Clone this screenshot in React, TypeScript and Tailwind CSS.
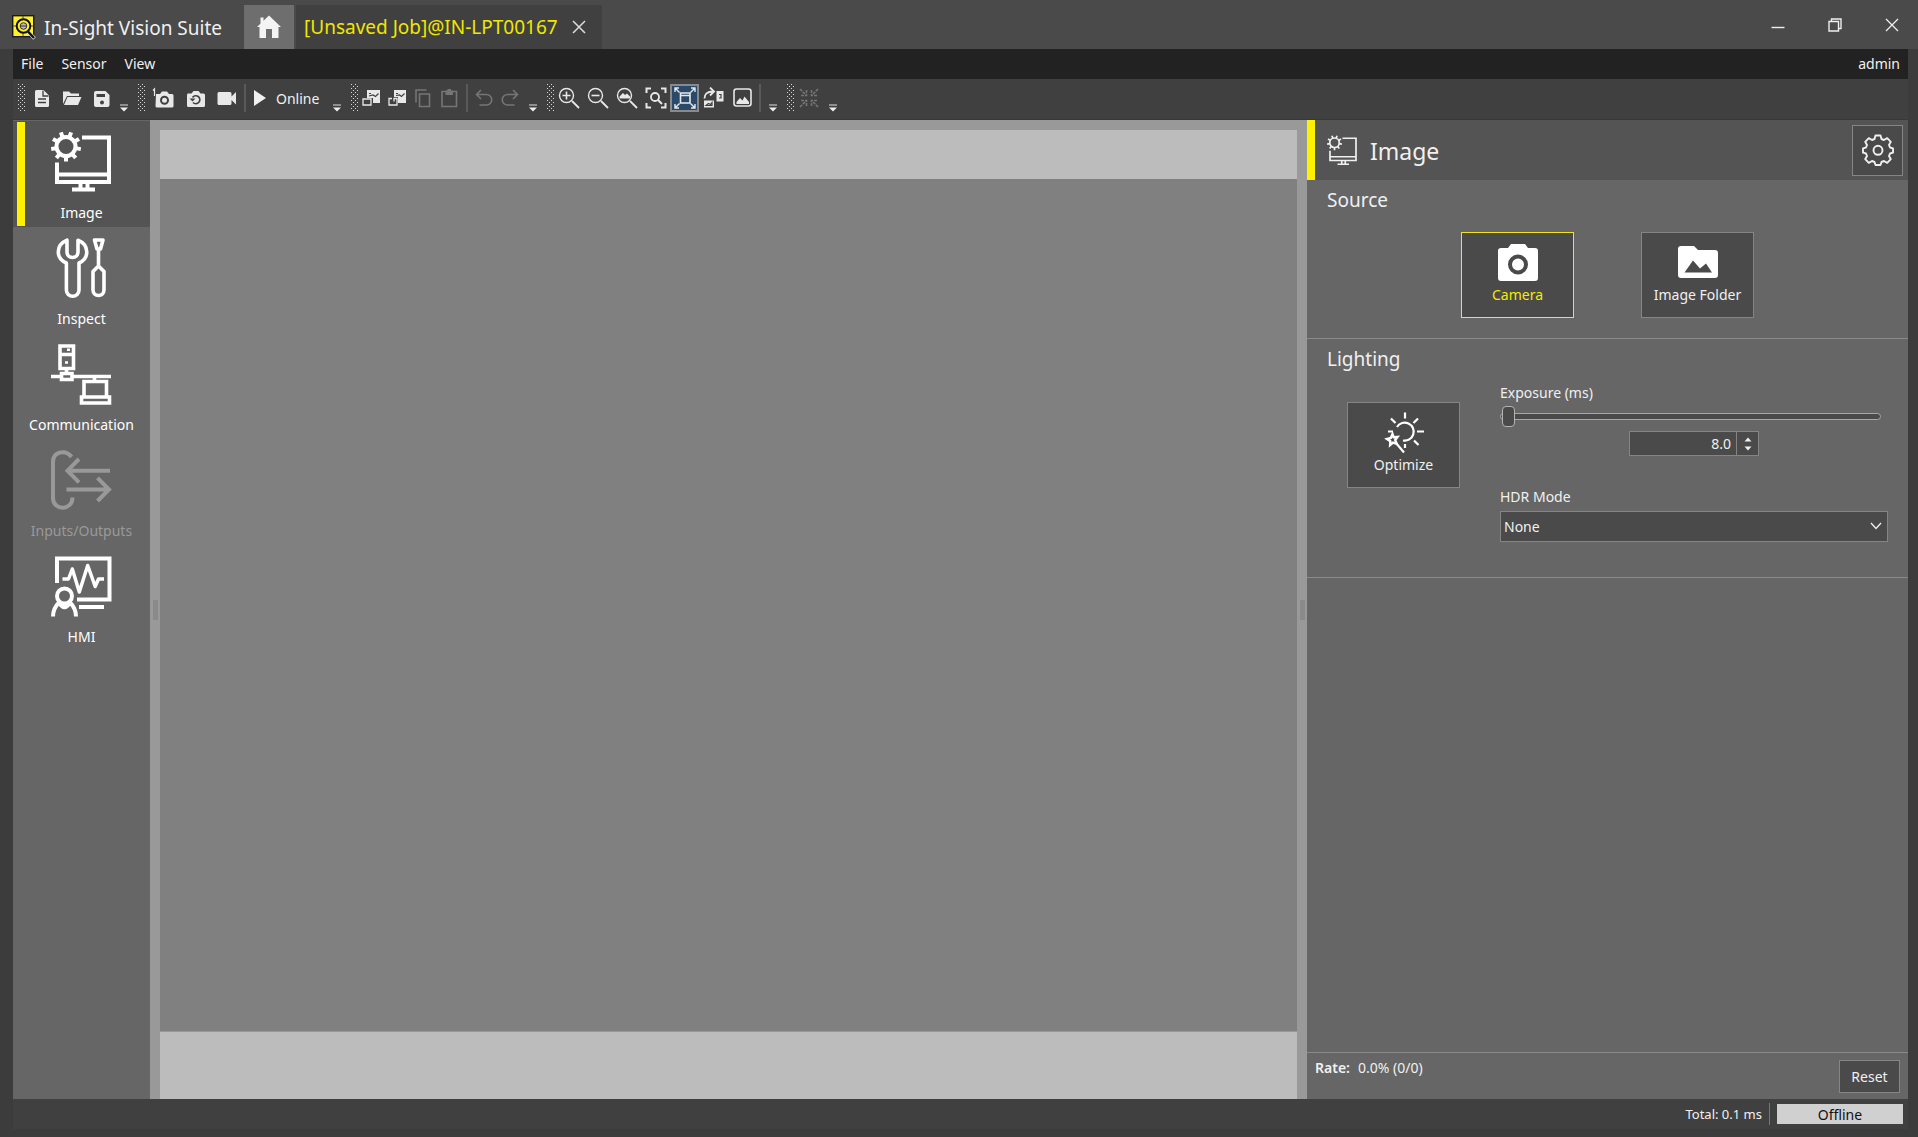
import type { ReactNode } from "react";

const gearTeeth = [0, 40, 80, 120, 160, 200, 240, 280, 320];

function MonitorGear({ className, thin }: { className: string; thin?: boolean }) {
  return (
    <svg viewBox="0 0 62 62" className={className} fill="none" stroke="currentColor" strokeWidth={thin ? 3.4 : 4} aria-hidden="true">
      <circle cx="15" cy="15.500" r="9.500" />
      {gearTeeth.map((a) => (
        <path key={a} d="M15 6V0.500" transform={`rotate(${a + 20} 15 15.500)`} />
      ))}
      <path d="M31 6.500H58V51H6V31.500M6 43.500H58M29.500 52v6M36.500 52v6M21 58.500h23" />
    </svg>
  );
}

function Tools() {
  return (
    <svg viewBox="0 0 62 62" className="size-[62px]" fill="none" stroke="currentColor" strokeWidth="3.600" strokeLinejoin="round" aria-hidden="true">
      <path d="M16 3.200V15a5.500 5.500 0 0 0 11 0V3.200C38.500 8 38.500 21.500 28 26V53a6.300 6.300 0 0 1-12.600 0V26C4.500 21.500 4.500 8 16 3.200Z" />
      <path d="M43.500 3H52l-2.500 9h-3.500ZM47.500 12v17M47.500 29l-5.500 5.500V53a5.500 5.500 0 0 0 11 0V34.500Z" />
    </svg>
  );
}

function Network() {
  return (
    <svg viewBox="0 0 62 62" className="size-[62px]" fill="none" stroke="currentColor" strokeWidth="3.600" aria-hidden="true">
      <path d="M9 3h13.500v22.500H9ZM9 11.500h13.500M15.500 26v4M10.500 30.500h10.500v6H10.500ZM0 33.500h10.500M21 33.500H60M43.500 34v4M33 54V38.500H55.500V54M30.500 54H58.500v6H30.500Z" />
      <path d="M16 6.800h3M14 19.500h3" strokeWidth="2.500" />
    </svg>
  );
}

function InOut() {
  return (
    <svg viewBox="0 0 62 62" className="size-[62px]" fill="none" stroke="currentColor" strokeWidth="4" aria-hidden="true">
      <path d="M20.500 8C15 0.500 2 2 2 13V49C2 62 21.500 62 21.500 48.500" />
      <path d="M59 21.700H16.500M28 10L16.500 21.700L28 33.400M15.500 40.500H58M46.500 28.800L58 40.500L46.500 52" />
    </svg>
  );
}

function Hmi() {
  return (
    <svg viewBox="0 0 62 62" className="size-[62px]" fill="none" stroke="currentColor" strokeWidth="4" aria-hidden="true">
      <path d="M6 28V3.500H58.500V44.500H26M28 52H53" />
      <path d="M11.500 24H17.500L21.300 14L28.300 37L36.700 10.500L44.200 31.500L47.500 24H53" strokeWidth="3.500" strokeLinejoin="round" />
      <circle cx="13.500" cy="41" r="7.500" />
      <path d="M2 61.500C2 56 4 51.500 8 47.500Q13.500 57 19 47.500C23 51.500 25 56 25 61.500" />
    </svg>
  );
}

function Grip() {
  return (
    <svg viewBox="0 0 7 28" className="h-7 w-[7px] shrink-0" shapeRendering="crispEdges" aria-hidden="true">
      {[0, 1, 2, 3, 4, 5, 6].map((i) => (
        <path key={i} d={`M0 ${i * 4}h1v1h-1ZM4 ${i * 4}h1v1h-1ZM2 ${i * 4 + 2}h1v1h-1ZM6 ${i * 4 + 2}h1v1h-1Z`} fill="#d8d8d8" />
      ))}
    </svg>
  );
}

function Overflow({ label }: { label: string }) {
  return (
    <button aria-label={label} className="flex h-7 w-[14px] items-end justify-center">
      <svg viewBox="0 0 8 8" className="size-2" aria-hidden="true">
        <path d="M0 1h8" stroke="#aaa" strokeWidth="1.500" />
        <path d="M0 3.500h8L4 7.500Z" fill="#eee" />
      </svg>
    </button>
  );
}

function Tool({ label, width, disabled, active, children }: { label: string; width: string; disabled?: boolean; active?: boolean; children: ReactNode }) {
  return (
    <button
      aria-label={label}
      disabled={disabled}
      aria-pressed={active}
      className={`flex h-7 shrink-0 items-center justify-center ${width} ${disabled ? "text-[#757575]" : "text-[#e8e8e8]"} ${active ? "border-2 border-[#8a8a8a] bg-[#2a4a6b]" : ""}`}
    >
      <svg viewBox="0 0 22 22" className="size-[22px] shrink-0" fill="none" stroke="currentColor" strokeWidth="1.600" aria-hidden="true">
        {children}
      </svg>
    </button>
  );
}

function Divider() {
  return <div className="h-7 w-0.5 bg-[#5a5a5a]" />;
}

function Group({ label, children }: { label: string; children: ReactNode }) {
  return (
    <div role="toolbar" aria-label={label} className="flex items-center">
      <Grip />
      {children}
    </div>
  );
}

const lens = "M14 14L21 21";

function Toolbar() {
  return (
    <div className="flex h-[41px] items-center gap-[7px] border-b border-[#383838] bg-[#404040] pb-0.5 pl-[5px]">
      <Group label="Job files">
        <div className="w-0.5" />
        <Tool label="New job" width="w-[30px]">
          <path d="M4 4.500A1.500 1.500 0 0 1 5.500 3H12.500L18 8.500V18.500A1.500 1.500 0 0 1 16.500 20H5.500A1.500 1.500 0 0 1 4 18.500Z" fill="currentColor" stroke="none" />
          <path d="M7 12h8M7 15.500h8M12 3.500v5.500h5.500" stroke="#404040" strokeWidth="1.300" />
        </Tool>
        <Tool label="Open job" width="w-[30px]">
          <path d="M2 17V4.500h6l2 2h8V9H6Z" fill="currentColor" stroke="none" />
          <path d="M6.500 10H20.500L17 18H3Z" fill="currentColor" stroke="none" />
        </Tool>
        <Tool label="Save job" width="w-[30px]">
          <path d="M3 6a2 2 0 0 1 2-2H14.500L18.500 8V18a2 2 0 0 1-2 2H5a2 2 0 0 1-2-2Z" fill="currentColor" stroke="none" />
          <path d="M5.500 7h8.500v3H5.500Z" fill="#404040" stroke="none" />
          <circle cx="11" cy="15.500" r="2" fill="#404040" stroke="none" />
        </Tool>
        <Overflow label="More job file tools" />
      </Group>
      <Group label="Acquisition">
        <div className="w-0.5" />
        <Tool label="Trigger once" width="w-8">
          <path d="M4 7h4l2-2.500h5L17 7h3a1.500 1.500 0 0 1 1.500 1.500V19a1.500 1.500 0 0 1-1.500 1.500H5A1.500 1.500 0 0 1 3.500 19Z" fill="currentColor" stroke="none" />
          <circle cx="12.500" cy="13.300" r="3.500" stroke="#404040" strokeWidth="2" />
          <path d="M1 3.500L2.500 2v7" strokeWidth="1.200" />
        </Tool>
        <Tool label="Repeat trigger" width="w-8">
          <path d="M3.500 6.500h4l2-2.500h5l2 2.500h3A1.500 1.500 0 0 1 21 8V18.500a1.500 1.500 0 0 1-1.500 1.500h-15A1.500 1.500 0 0 1 3 18.500V8Z" fill="currentColor" stroke="none" />
          <path d="M9 15.500a4 4 0 1 0-0.500-5" stroke="#404040" />
          <path d="M5.500 11.500h6L8.500 14.500Z" fill="#404040" stroke="none" />
        </Tool>
        <Tool label="Live video" width="w-8">
          <path d="M1.500 6.500A1.500 1.500 0 0 1 3 5h11a1.500 1.500 0 0 1 1.500 1.500V9.500l4.500-4.500V17.500l-4.500-4.500v3.500a1.500 1.500 0 0 1-1.500 1.500H3a1.500 1.500 0 0 1-1.500-1.500Z" fill="currentColor" stroke="none" />
        </Tool>
        <div className="w-px" />
        <Divider />
        <button className="flex h-7 items-center gap-2.5 px-2 text-[#f0f0f0]">
          <svg viewBox="0 0 12 16" className="h-4 w-3" aria-hidden="true">
            <path d="M0 0L12 8L0 16Z" fill="currentColor" />
          </svg>
          <span className="w-[46px] text-left text-[14px]">Online</span>
        </button>
        <Overflow label="More acquisition tools" />
      </Group>
      <Group label="Edit">
        <Tool label="Send to back" width="w-[26px]">
          <path d="M7 3H20V16H13V11H7Z" fill="currentColor" stroke="none" />
          <path d="M9 6.500h2M9 9l4-1 2.500 1.500L18.500 6.500" stroke="#404040" strokeWidth="1.200" />
          <path d="M3 12h8v6H3Z" strokeWidth="1.300" />
        </Tool>
        <Tool label="Bring to front" width="w-[26px]">
          <path d="M8 3H20V16H12V10H8Z" fill="currentColor" stroke="none" />
          <path d="M10 6.500h2M10 8.500l3.500-0.500 2 1.500L18.500 6.500" stroke="#404040" strokeWidth="1.200" />
          <path d="M6 11.500H3V18h8v-6.500H8v3" strokeWidth="1.300" />
        </Tool>
        <Tool label="Copy" width="w-[26px]" disabled>
          <path d="M7.500 7h10v12.500h-10ZM4 15.500V3h10.500" />
        </Tool>
        <Tool label="Paste" width="w-[26px]" disabled>
          <path d="M4 4.500H18.500V19.500H4Z" />
          <path d="M7.500 3.500h7.500v4.500H7.500ZM9.500 2h3.500v2H9.500Z" fill="currentColor" stroke="none" />
        </Tool>
        <div className="w-1" />
        <Divider />
        <div className="w-[3px]" />
        <Tool label="Undo" width="w-[26px]" disabled>
          <path d="M8 3L3.500 7.500L8 12M4 7.500H13.500a5 5 0 0 1 0 10.500H6.500" />
        </Tool>
        <Tool label="Redo" width="w-[26px]" disabled>
          <path d="M14 3l4.500 4.500L14 12M18 7.500H8.500a5 5 0 0 0 0 10.500H15.500" />
        </Tool>
        <div className="w-[3px]" />
        <Overflow label="More edit tools" />
      </Group>
      <Group label="View">
        <Tool label="Zoom in" width="w-[29px]">
          <circle cx="8.500" cy="8.500" r="7" strokeWidth="1.400" />
          <path d={lens} strokeWidth="1.800" />
          <path d="M4.500 8.500h8M8.500 4.500v8" />
        </Tool>
        <Tool label="Zoom out" width="w-[29px]">
          <circle cx="8.500" cy="8.500" r="7" strokeWidth="1.400" />
          <path d={lens} strokeWidth="1.800" />
          <path d="M4.500 8.500h8" />
        </Tool>
        <Tool label="Zoom image" width="w-[29px]">
          <circle cx="8.500" cy="8.500" r="7" strokeWidth="1.400" />
          <path d={lens} strokeWidth="1.800" />
          <path d="M3.500 11.500V9.500L7 6l2 2 2-1.500 3 3v2Z" fill="currentColor" stroke="none" />
        </Tool>
        <Tool label="Zoom to region" width="w-[29px]">
          <path d="M1.500 6V1.500H6M16 1.500h4.500V6M20.500 16v4.500H16M6 20.500H1.500V16" strokeWidth="2" />
          <circle cx="10" cy="10" r="4" strokeWidth="1.800" />
          <path d="M12.800 12.800L17 17" strokeWidth="2" />
        </Tool>
        <Tool label="Fit to window" width="w-[29px]" active>
          <path d="M6.500 6h9.500v10H6.500ZM6.500 8.500H16" />
          <path d="M1 5V1h4M1 1l4.500 4.500M17 1h4v4M21 1l-4.500 4.500M21 17v4h-4M21 21l-4.500-4.500M5 21H1v-4M1 21l4.500-4.500" strokeWidth="1.400" />
        </Tool>
        <Tool label="Rotate image" width="w-[29px]">
          <path d="M13.500 4H20.500V14.500H13.500Z" fill="currentColor" stroke="none" />
          <path d="M1 13.500H11V20.500H1Z" fill="currentColor" stroke="none" />
          <path d="M1.500 11.500C1.500 7 4 4.500 10 4.500M7 0.500L11 4.500L7 8.500" strokeWidth="1.800" />
          <path d="M16 7.500h2v3.500h-2M3 18.500l2.500-2 2 1 1.500-2v3Z" stroke="#404040" strokeWidth="1.200" />
        </Tool>
        <Tool label="Show image" width="w-[29px]">
          <rect x="2" y="2" width="17" height="17" rx="2.500" />
          <path d="M4.500 17V15l3.500-4 2.500 2.500L12.500 9.500l4.500 5.500v2Z" fill="currentColor" stroke="none" />
        </Tool>
        <div className="w-0.5" />
        <Divider />
        <div className="w-[5px]" />
        <Overflow label="More view tools" />
      </Group>
      <Group label="Full screen">
        <Tool label="Collapse" width="w-[29px]" disabled>
          <path d="M2 2l6 6M3 8.500h5.500V3M20 2l-6 6M19 8.500h-5.500V3M20 20l-6-6M13.500 19v-5.500H19M2 20l6-6M3 13.500h5.500V19" strokeDasharray="3 1" />
        </Tool>
        <div className="w-[3px]" />
        <Overflow label="More screen tools" />
      </Group>
    </div>
  );
}

const navItems = [
  { label: "Image", icon: <MonitorGear className="size-[62px]" />, state: "on" },
  { label: "Inspect", icon: <Tools />, state: "" },
  { label: "Communication", icon: <Network />, state: "" },
  { label: "Inputs/Outputs", icon: <InOut />, state: "off" },
  { label: "HMI", icon: <Hmi />, state: "" },
];

function Sidebar() {
  return (
    <nav className="flex w-[137px] shrink-0 flex-col bg-[#666] pt-px">
      {navItems.map((n) => (
        <button
          key={n.label}
          disabled={n.state === "off"}
          className={`relative flex h-[106px] flex-col items-center pt-2.5 ${n.state === "off" ? "text-[#999]" : "text-white"} ${n.state === "on" ? "bg-[#545454]" : ""}`}
        >
          {n.state === "on" && <span className="absolute inset-y-px left-1 w-2 bg-[#fff200]" />}
          {n.icon}
          <span className="mt-2.5 text-[14px] leading-5">{n.label}</span>
        </button>
      ))}
    </nav>
  );
}

function Splitter() {
  return (
    <div role="separator" className="flex w-2.5 shrink-0 items-center justify-center bg-[#999]">
      <div className="h-5 w-[5px] bg-[#8a8a8a]" />
    </div>
  );
}

function Tile({ label, selected, children }: { label: string; selected?: boolean; children: ReactNode }) {
  return (
    <button
      className={`flex h-[86px] w-[113px] shrink-0 flex-col items-center border bg-[#4a4a4a] pt-[9px] ${selected ? "border-[#f0e614] text-[#f5eb00]" : "border-[#858585] text-[#f0f0f0]"}`}
    >
      <svg viewBox="0 0 42 42" className="size-[42px] text-white" aria-hidden="true">
        {children}
      </svg>
      <span className="mt-px text-[14px] leading-5">{label}</span>
    </button>
  );
}

function Settings() {
  return (
    <aside className="flex w-[601px] shrink-0 flex-col bg-[#666] text-[#f0f0f0]">
      <header className="flex h-[60px] items-center border-l-8 border-[#fff200] bg-[#545454] pr-[5px] pl-3">
        <MonitorGear className="size-[31px]" thin />
        <h1 className="ml-3 grow pt-0.5 text-[23px] leading-8">Image</h1>
        <button aria-label="Image settings" className="flex size-[51px] items-center justify-center border border-[#858585] bg-[#4a4a4a]">
          <svg viewBox="0 0 32 32" className="size-8" fill="none" stroke="currentColor" strokeWidth="1.900" strokeLinejoin="round" aria-hidden="true">
            <path d="M13.500 1.500h5l1 3.500 2.500 1 3.200-1.800 3.600 3.600L27 11l1 2.500 3 .8v4.400l-3 .8L27 22l1.800 3.200-3.600 3.600L22 27l-2.500 1-1 3h-5l-1-3L10 27l-3.200 1.800-3.600-3.600L5 22l-1-2.500-3-.8v-4.400l3-.8L5 11 3.200 7.800 6.800 4.200 10 6l2.500-1Z" />
            <circle cx="16" cy="16.300" r="4.500" />
          </svg>
        </button>
      </header>
      <section className="h-[159px] border-b border-[#8a8a8a]">
        <h2 className="pt-2 pl-5 text-[19px] leading-6">Source</h2>
        <div className="mt-5 flex justify-center gap-[67px]">
          <Tile label="Camera" selected>
            <path d="M4 6h7l3-4H28l3 4h7a3 3 0 0 1 3 3V36a3 3 0 0 1-3 3H4a3 3 0 0 1-3-3V9a3 3 0 0 1 3-3Z" fill="currentColor" />
            <circle cx="21" cy="22.500" r="8" fill="none" stroke="#4a4a4a" strokeWidth="4" />
          </Tile>
          <Tile label="Image Folder">
            <path d="M4 4H17l4 4H38a3 3 0 0 1 3 3V33a3 3 0 0 1-3 3H4a3 3 0 0 1-3-3V7a3 3 0 0 1 3-3Z" fill="currentColor" />
            <path d="M7.500 30.500L16 18.500l7 8 6-5 6 9Z" fill="#4a4a4a" />
          </Tile>
        </div>
      </section>
      <section className="h-[239px] border-b border-[#8a8a8a]">
        <h2 className="pt-2 pl-5 text-[19px] leading-6">Lighting</h2>
        <div className="flex items-start gap-10 pr-5 pl-10">
          <div className="pt-[31px]">
            <Tile label="Optimize">
              <g fill="none" stroke="currentColor" strokeWidth="2.200">
                <path d="M14 15a9 9 0 1 1 6 13.500" />
                <path d="M22 0.500v6M34 19.500h7M35 6.500l-4.500 4.500M8 6.500l4.500 4.500M31 28.500l4.500 4.500M22 32v4M5 19.500h5" />
                <path d="M9.500 22l1.200 3.300 3.800-.3-2.300 3 1.500 3.800-3.700-1.300-2.900 2.500.2-3.800-3.300-2.200 3.800-1Z" strokeWidth="2.400" />
                <path d="M13 31l8 9.500" />
              </g>
            </Tile>
          </div>
          <div className="flex grow flex-col pt-3">
            <label htmlFor="exposure" className="text-[14px] leading-5">Exposure (ms)</label>
            <input
              id="exposure"
              type="range"
              min="0"
              max="2000"
              defaultValue="8"
              className="mt-[3px] mr-[7px] h-[21px] appearance-none bg-transparent [&::-webkit-slider-runnable-track]:h-[7px] [&::-webkit-slider-runnable-track]:rounded-sm [&::-webkit-slider-runnable-track]:border [&::-webkit-slider-runnable-track]:border-[#a8a8a8] [&::-webkit-slider-runnable-track]:bg-[#4a4a4a] [&::-webkit-slider-thumb]:-mt-2 [&::-webkit-slider-thumb]:h-[21px] [&::-webkit-slider-thumb]:w-[13px] [&::-webkit-slider-thumb]:appearance-none [&::-webkit-slider-thumb]:rounded [&::-webkit-slider-thumb]:border [&::-webkit-slider-thumb]:border-[#b4b4b4] [&::-webkit-slider-thumb]:bg-[#4a4a4a]"
            />
            <div className="mt-1 flex h-[25px] w-[130px] self-center border border-[#858585] bg-[#4a4a4a]">
              <input aria-label="Exposure value" defaultValue="8.0" className="w-full min-w-0 grow bg-transparent pr-[5px] text-right text-[14px] outline-none" />
              <div className="flex w-[22px] shrink-0 flex-col items-center justify-center gap-1 border-l border-[#858585]">
                <button aria-label="Increase exposure">
                  <svg viewBox="0 0 8 5" className="h-[5px] w-2" aria-hidden="true"><path d="M0.500 4.500L4 0.500L7.500 4.500Z" fill="currentColor" /></svg>
                </button>
                <button aria-label="Decrease exposure">
                  <svg viewBox="0 0 8 5" className="h-[5px] w-2" aria-hidden="true"><path d="M0.500 0.500L4 4.500L7.500 0.500Z" fill="currentColor" /></svg>
                </button>
              </div>
            </div>
            <label htmlFor="hdr" className="mt-[31px] text-[14px] leading-5">HDR Mode</label>
            <div className="relative mt-1">
              <select id="hdr" className="block h-[31px] w-full appearance-none border border-[#858585] bg-[#4a4a4a] pl-[3px] text-[14px] outline-none">
                <option>None</option>
              </select>
              <svg viewBox="0 0 12 8" className="pointer-events-none absolute top-[11px] right-1.5 h-2 w-3" fill="none" stroke="currentColor" strokeWidth="1.300" aria-hidden="true">
                <path d="M1 1l5 5.500L11 1" />
              </svg>
            </div>
          </div>
        </div>
      </section>
      <footer className="mt-auto flex h-[47px] items-start justify-between border-t border-[#8a8a8a] pr-2 pl-2">
        <p className="pt-[5px] text-[14px] leading-5">
          <b className="mr-2 font-semibold">Rate:</b>0.0% (0/0)
        </p>
        <button className="mt-[7px] h-[33px] w-[61px] border border-[#858585] bg-[#4a4a4a] text-[14px]">Reset</button>
      </footer>
    </aside>
  );
}

function TitleBar() {
  return (
    <header className="flex h-[49px] shrink-0 items-end bg-[#4a4a4a] pl-3 text-[#f0f0f0]">
      <div className="flex h-11 w-[232px] items-center">
        <svg viewBox="0 0 24 25" className="h-[25px] w-6 shrink-0" fill="none" aria-hidden="true">
          <rect x="0.700" y="0.700" width="21" height="21" fill="#fff02a" stroke="#1a1a1a" strokeWidth="1.400" />
          <path d="M11 1v21M1 11h21" stroke="#333" strokeWidth="0.800" />
          <path d="M16.500 17L22.500 23.500" stroke="#ddd" strokeWidth="3.600" />
          <path d="M16 16.500L22 23" stroke="#111" strokeWidth="2.400" />
          <circle cx="11.500" cy="11" r="6.800" fill="#fff02a" stroke="#111" strokeWidth="2" />
          <circle cx="11.500" cy="11" r="3.300" fill="#bbb" stroke="#333" />
          <path d="M8 11h7" stroke="#333" />
        </svg>
        <span className="ml-2 pt-px text-[19px] leading-7 whitespace-nowrap">In-Sight Vision Suite</span>
      </div>
      <button aria-label="Home" className="flex h-11 w-[50px] shrink-0 items-center justify-center bg-[#6e6e6e]">
        <svg viewBox="0 0 24 24" className="size-6" aria-hidden="true">
          <path d="M12 0.500L24 12H21.500V23H15V14H9V23H2.500V12H0L3.500 8.500V2.500H6.500V5.700Z" fill="#f4f4f4" />
        </svg>
      </button>
      <div className="ml-0.5 flex h-11 w-[306px] items-center bg-[#404040] pl-2">
        <span className="grow text-[19px] leading-7 whitespace-nowrap text-[#f0e600]">[Unsaved Job]@IN-LPT00167</span>
        <button aria-label="Close tab" className="mr-4">
          <svg viewBox="0 0 14 14" className="size-3.5" stroke="#ddd" strokeWidth="1.500" aria-hidden="true"><path d="M1 1l12 12M13 1L1 13" /></svg>
        </button>
      </div>
      <div className="ml-auto flex h-11 items-center gap-[43px] pr-[19px] pb-1">
        <button aria-label="Minimize">
          <svg viewBox="0 0 14 14" className="size-3.5" stroke="#eee" strokeWidth="1.400" aria-hidden="true"><path d="M0.500 9.500h13" /></svg>
        </button>
        <button aria-label="Restore">
          <svg viewBox="0 0 14 14" className="size-3.5" fill="none" stroke="#eee" strokeWidth="1.400" aria-hidden="true"><path d="M1 3.500h9.500V13H1ZM3.500 3.500V1H13v9.500h-2.500" /></svg>
        </button>
        <button aria-label="Close">
          <svg viewBox="0 0 14 14" className="size-3.5" stroke="#eee" strokeWidth="1.300" aria-hidden="true"><path d="M1 1l12 12M13 1L1 13" /></svg>
        </button>
      </div>
    </header>
  );
}

export default function App() {
  return (
    <div className="flex h-screen min-h-[700px] flex-col bg-[#3c3c3c] font-['Noto_Sans','Open_Sans',sans-serif]">
      <TitleBar />
      <div className="mr-2.5 mb-2 ml-[13px] flex min-h-0 grow flex-col">
        <div className="flex h-[30px] shrink-0 items-center bg-[#222] px-2 pb-0.5 text-[14px] text-[#f0f0f0]">
          <div role="menubar" className="flex grow gap-[18px]">
            <button role="menuitem">File</button>
            <button role="menuitem">Sensor</button>
            <button role="menuitem">View</button>
          </div>
          <span>admin</span>
        </div>
        <Toolbar />
        <div className="flex min-h-0 grow">
          <Sidebar />
          <Splitter />
          <main className="flex min-w-0 grow flex-col border-t-[10px] border-[#999] bg-[#808080]">
            <div className="h-[49px] bg-[#bcbcbc]" />
            <div className="grow border-b border-[#999]" />
            <div className="h-[67px] bg-[#bcbcbc]" />
          </main>
          <Splitter />
          <Settings />
        </div>
        <footer className="flex h-[30px] shrink-0 items-center justify-end bg-[#404040] pr-[5px] text-[13px] text-[#f0f0f0]">
          <span className="pt-0.5">Total: 0.1 ms</span>
          <div className="mx-[7px] h-[22px] w-px bg-[#757575]" />
          <output className="flex h-5 w-[126px] items-center justify-center bg-[#d0d0d0] text-[14px] text-[#111]">Offline</output>
        </footer>
      </div>
    </div>
  );
}
